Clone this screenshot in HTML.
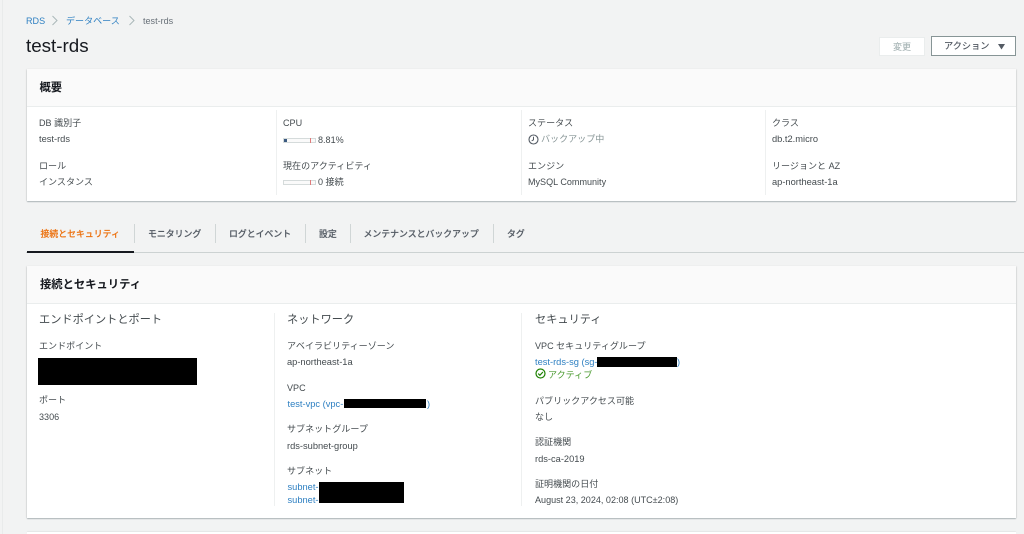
<!DOCTYPE html>
<html lang="ja">
<head>
<meta charset="utf-8">
<title>test-rds</title>
<style>
html,body{margin:0;padding:0;width:1024px;height:534px;overflow:hidden;background:#f2f3f3}
body{position:relative;font-family:"Liberation Sans","Noto Sans CJK JP",sans-serif;font-size:9.05px;color:#444b4f}
#w{position:absolute;left:0;top:0;width:1024px;height:534px;filter:blur(.35px)}
.t{position:absolute;white-space:nowrap;line-height:14px;height:14px}
.a{color:#2f80c2;font-size:9.3px}
.w{font-size:9.3px}
.b{position:absolute;background:#000}
.card{position:absolute;left:26.500px;width:989.500px;background:#fff;box-shadow:0 1px 1px 0 rgba(0,28,36,.28),1px 0 1px 0 rgba(0,28,36,.06),-1px 0 1px 0 rgba(0,28,36,.06)}
.hd{position:absolute;left:0;top:0;width:989.500px;background:#fafafa;border-bottom:1px solid #eaeded}
.v{position:absolute;width:1px;background:#eef0f0}
.tv{position:absolute;width:1px;background:#d0d6d6;top:224px;height:19px}
.tab{position:absolute;white-space:nowrap;top:227px;line-height:14px;font-weight:500;color:#545b64;font-size:8.9px;-webkit-text-stroke:.15px}
.h2{position:absolute;white-space:nowrap;font-weight:700;font-size:11.300px;color:#16191f;line-height:16px}
.h3{position:absolute;white-space:nowrap;font-size:11.200px;color:#444b4f;line-height:16px}
.bar{position:absolute;width:31px;height:3px;background:#fafafa;border:1px solid #d5dbdb}
.bar i{position:absolute;top:-1px;left:26px;width:1px;height:5px;background:#e07b7b}
svg{position:absolute}
</style>
</head>
<body>
<div id="w">
<div style="position:absolute;left:2px;top:0;width:1px;height:534px;background:#e9ebeb"></div>

<span class="t a" style="left:26px;top:13.500px;font-size:9.05px">RDS</span>
<svg style="left:51px;top:15px" width="8" height="11" viewBox="0 0 8 11"><path d="M1.500 1l4.500 4.500-4.500 4.500" fill="none" stroke="#aab7b8" stroke-width="1"/></svg>
<span class="t a" style="left:66px;top:13.500px;font-size:9.05px">データベース</span>
<svg style="left:128px;top:15px" width="8" height="11" viewBox="0 0 8 11"><path d="M1.500 1l4.500 4.500-4.500 4.500" fill="none" stroke="#aab7b8" stroke-width="1"/></svg>
<span class="t" style="left:143px;top:13.500px;color:#687078">test-rds</span>
<span class="t" style="left:26px;top:37px;font-size:18.800px;line-height:18px;height:18px;color:#16191f">test-rds</span>

<div style="position:absolute;left:879px;top:36.500px;width:44px;height:17px;background:#fff;border:1px solid #eaeded;color:#aab7b8;font-weight:500;text-align:center;line-height:18px">変更</div>
<div style="position:absolute;left:931px;top:36px;width:83px;height:17.500px;background:#fff;border:1px solid #879596;color:#545b64;font-weight:500;line-height:19px"><span style="position:absolute;left:12px;top:0;font-size:9.200px">アクション</span><svg style="left:66px;top:7px" width="8" height="6" viewBox="0 0 8 6"><path d="M0 0h7l-3.500 5.500z" fill="#545b64"/></svg></div>

<div class="card" style="top:69px;height:132px">
  <div class="hd" style="height:37px"></div>
  <span class="h2" style="left:13px;top:10.500px">概要</span>
  <div class="v" style="left:249.500px;top:41px;height:85px"></div>
  <div class="v" style="left:494.500px;top:41px;height:85px"></div>
  <div class="v" style="left:738.500px;top:41px;height:85px"></div>
</div>

<span class="t" style="left:39px;top:116px">DB 識別子</span>
<span class="t w" style="left:39px;top:132px">test-rds</span>
<span class="t" style="left:39px;top:159px">ロール</span>
<span class="t" style="left:39px;top:175px">インスタンス</span>

<span class="t" style="left:283px;top:116px">CPU</span>
<div class="bar" style="left:283px;top:138px"><div style="position:absolute;left:0;top:0;width:3px;height:3px;background:#3b5a80"></div><i></i></div>
<span class="t" style="left:318px;top:133px">8.81%</span>
<span class="t" style="left:283px;top:159px">現在のアクティビティ</span>
<div class="bar" style="left:283px;top:180px"><i></i></div>
<span class="t" style="left:318px;top:175px">0 接続</span>

<span class="t" style="left:528px;top:116px">ステータス</span>
<svg style="left:528px;top:134px" width="11" height="11" viewBox="0 0 11 11"><circle cx="5.500" cy="5.500" r="4.500" fill="none" stroke="#545b64" stroke-width="1.100"/><path d="M5.500 2.800v3l-1.800 1" fill="none" stroke="#545b64" stroke-width="1"/></svg>
<span class="t" style="left:541px;top:132px;color:#879596">バックアップ中</span>
<span class="t" style="left:528px;top:159px">エンジン</span>
<span class="t" style="left:528px;top:175px">MySQL Community</span>

<span class="t" style="left:772px;top:116px">クラス</span>
<span class="t w" style="left:772px;top:132px">db.t2.micro</span>
<span class="t" style="left:772px;top:159px">リージョンと AZ</span>
<span class="t w" style="left:772px;top:175px">ap-northeast-1a</span>

<div style="position:absolute;left:26px;top:252px;width:998px;height:1px;background:#ccd2d2"></div>
<div style="position:absolute;left:27px;top:250.500px;width:107px;height:2px;background:#16191f"></div>
<span class="tab" style="left:40.500px;color:#ec7211">接続とセキュリティ</span>
<div class="tv" style="left:134px"></div>
<span class="tab" style="left:148px">モニタリング</span>
<div class="tv" style="left:215px"></div>
<span class="tab" style="left:229px">ログとイベント</span>
<div class="tv" style="left:305px"></div>
<span class="tab" style="left:319px">設定</span>
<div class="tv" style="left:350px"></div>
<span class="tab" style="left:363.500px">メンテナンスとバックアップ</span>
<div class="tv" style="left:493px"></div>
<span class="tab" style="left:507px">タグ</span>

<div class="card" style="top:266px;height:252px">
  <div class="hd" style="height:37px"></div>
  <span class="h2" style="left:13.500px;top:10.500px">接続とセキュリティ</span>
  <div class="v" style="left:247.500px;top:47px;height:193px"></div>
  <div class="v" style="left:494.500px;top:47px;height:193px"></div>
</div>

<span class="h3" style="left:39px;top:312px">エンドポイントとポート</span>
<span class="t" style="left:39px;top:339px">エンドポイント</span>
<div class="b" style="left:38px;top:358px;width:159px;height:27px"></div>
<span class="t" style="left:39px;top:393px">ポート</span>
<span class="t" style="left:39px;top:410px">3306</span>

<span class="h3" style="left:287px;top:312px">ネットワーク</span>
<span class="t" style="left:287px;top:339px">アベイラビリティーゾーン</span>
<span class="t w" style="left:287px;top:355px">ap-northeast-1a</span>
<span class="t" style="left:287px;top:381px">VPC</span>
<span class="t a" style="left:287.500px;top:397px">test-vpc (vpc-</span>
<span class="t a" style="left:427px;top:397px">)</span>
<div class="b" style="left:344px;top:399px;width:82px;height:9px"></div>
<span class="t" style="left:287px;top:422px">サブネットグループ</span>
<span class="t w" style="left:287px;top:439px">rds-subnet-group</span>
<span class="t" style="left:287px;top:464px">サブネット</span>
<span class="t a" style="left:287.500px;top:480px">subnet-</span>
<span class="t a" style="left:287.500px;top:493px">subnet-</span>
<div class="b" style="left:319px;top:482px;width:85px;height:21px"></div>

<span class="h3" style="left:535px;top:312px">セキュリティ</span>
<span class="t" style="left:535px;top:339px">VPC セキュリティグループ</span>
<span class="t a" style="left:535px;top:355px">test-rds-sg (sg-</span>
<span class="t a" style="left:677px;top:355px">)</span>
<div class="b" style="left:597px;top:357px;width:80px;height:10px"></div>
<svg style="left:535px;top:368px" width="11" height="11" viewBox="0 0 11 11"><circle cx="5.500" cy="5.500" r="4.500" fill="none" stroke="#1d8102" stroke-width="1.200"/><path d="M3.200 5.600l1.700 1.700 3-3.300" fill="none" stroke="#1d8102" stroke-width="1.200"/></svg>
<span class="t" style="left:548px;top:368px;color:#4a9a2f">アクティブ</span>
<span class="t" style="left:535px;top:394px">パブリックアクセス可能</span>
<span class="t" style="left:535px;top:410px">なし</span>
<span class="t" style="left:535px;top:435px">認証機関</span>
<span class="t w" style="left:535px;top:452px">rds-ca-2019</span>
<span class="t" style="left:535px;top:477px">証明機関の日付</span>
<span class="t" style="left:535px;top:493px">August 23, 2024, 02:08 (UTC±2:08)</span>

<div style="position:absolute;left:26.500px;top:532px;width:989.500px;height:2px;background:#fff;box-shadow:0 -1px 1px rgba(0,28,36,.06)"></div>
</div>
</body>
</html>
